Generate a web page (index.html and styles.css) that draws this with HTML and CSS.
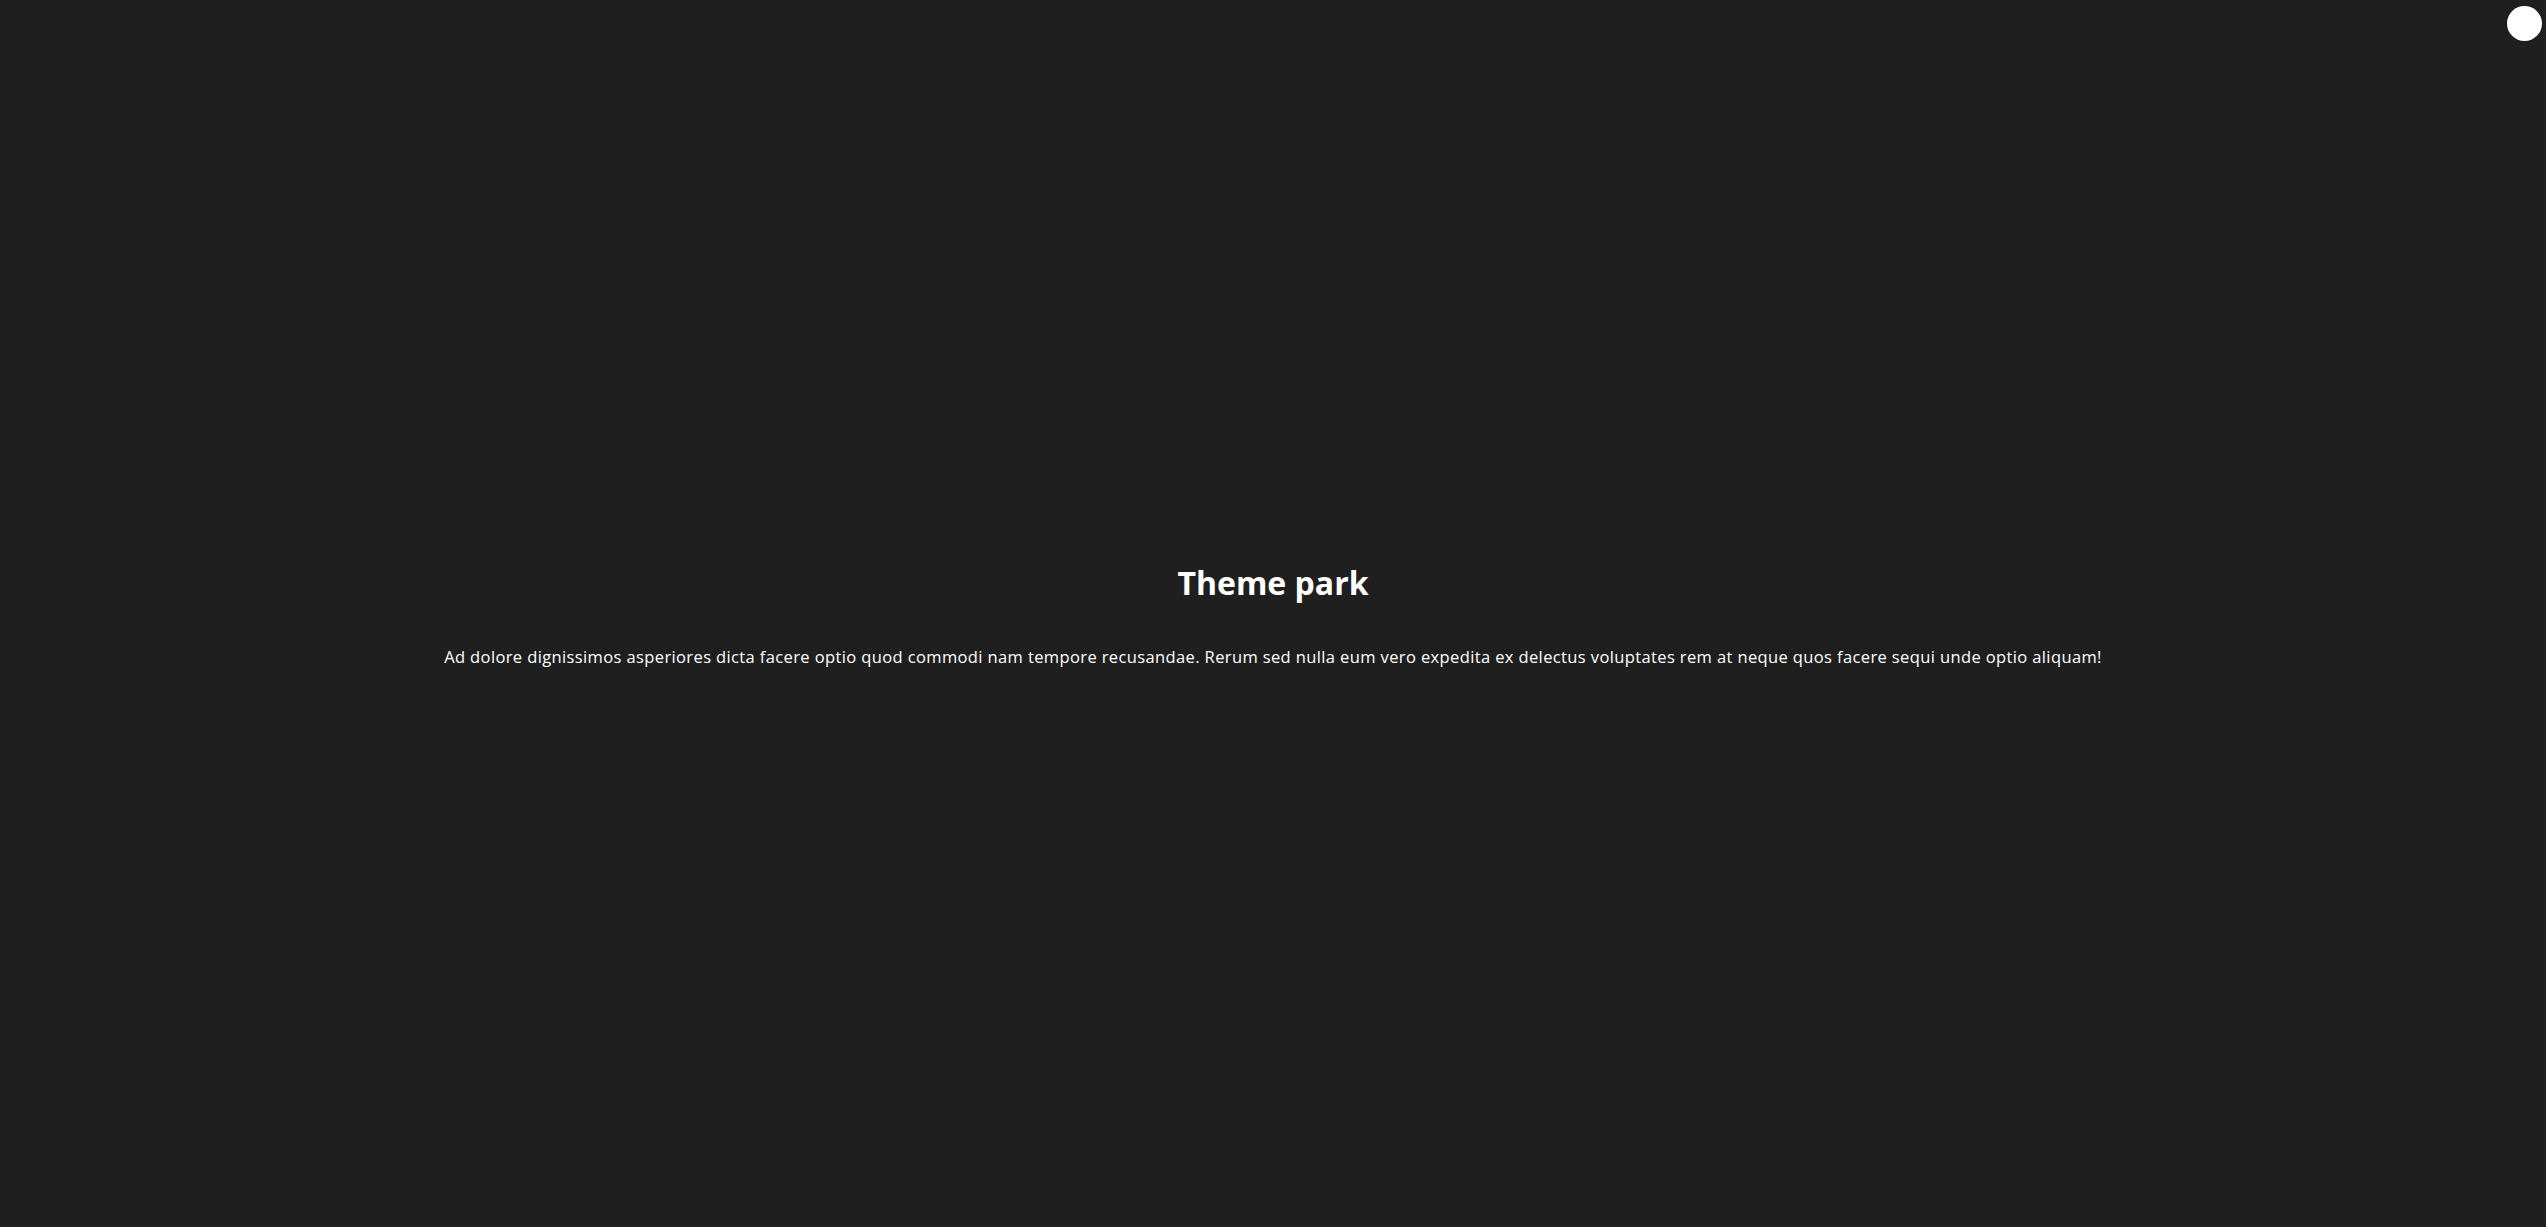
FILE: index.html
```html
<!DOCTYPE html>
<html lang="en">
<head>
<meta charset="utf-8">
<title>Theme park</title>
<link rel="stylesheet" href="styles.css">
</head>
<body>
<button class="theme-toggle" aria-label="Toggle theme"></button>
<main class="hero">
  <h1 class="hero-title">Theme park</h1>
  <p class="hero-text">Ad dolore dignissimos asperiores dicta facere optio quod commodi nam tempore recusandae. Rerum sed nulla eum vero expedita ex delectus voluptates rem at neque quos facere sequi unde optio aliquam!</p>
</main>
</body>
</html>
```
FILE: styles.css
```css
html, body {
  margin: 0;
  padding: 0;
  height: 100%;
}
body {
  background: #1f1f1f;
  color: #ffffff;
  font-family: "Open Sans", "Liberation Sans", sans-serif;
}
.theme-toggle {
  position: absolute;
  top: 6px;
  right: 4px;
  width: 35px;
  height: 35px;
  border-radius: 50%;
  border: none;
  background: #ffffff;
  padding: 0;
}
.hero {
  min-height: 100vh;
  display: flex;
  flex-direction: column;
  align-items: center;
  justify-content: center;
  text-align: center;
}
.hero-title {
  font-size: 32px;
  font-weight: 700;
  line-height: 48px;
  margin: 0 0 38px;
}
.hero-text {
  font-size: 16.5px;
  letter-spacing: 0.38px;
  line-height: 24px;
  margin: 0;
}
```
